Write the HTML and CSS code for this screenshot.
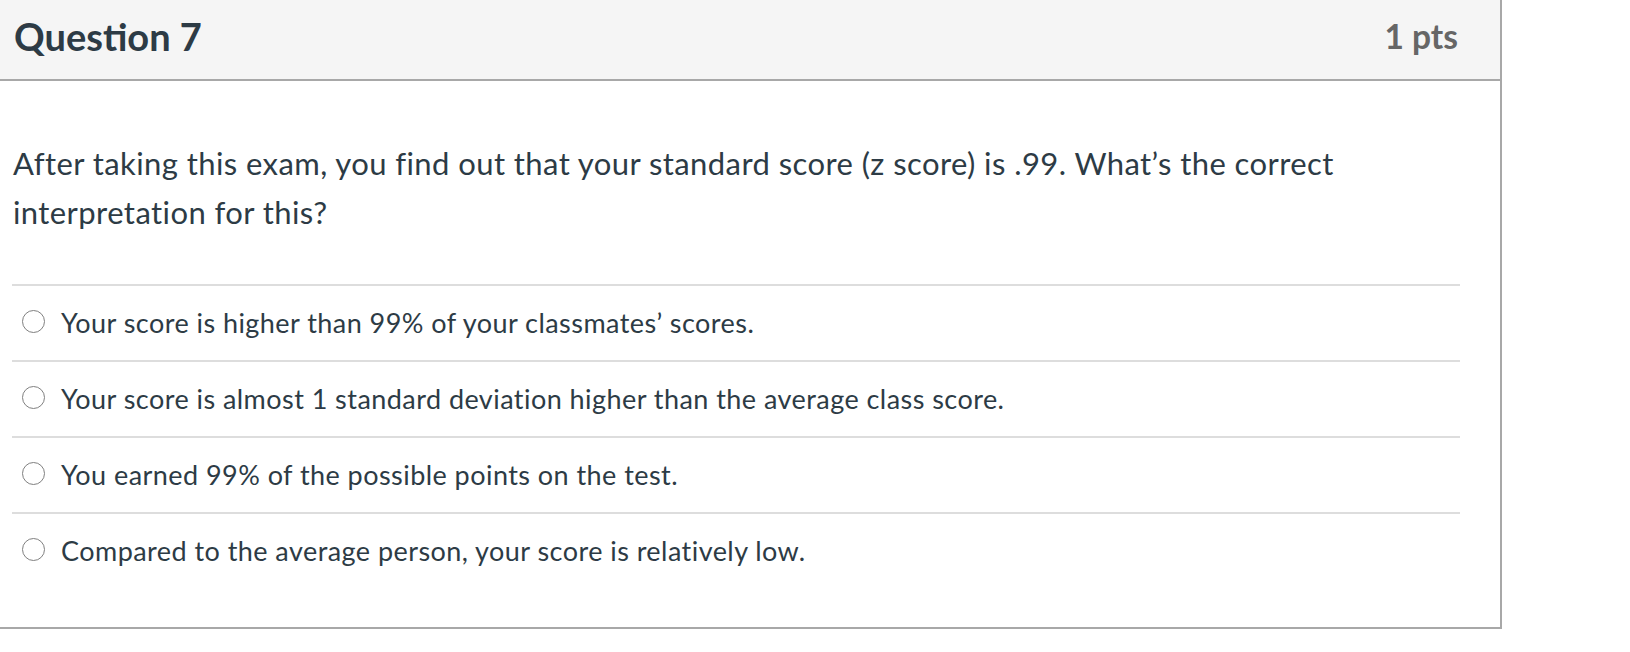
FILE: index.html
```html
<!DOCTYPE html>
<html lang="en">
<head>
<meta charset="utf-8">
<title>Question 7</title>
<link rel="stylesheet" href="styles.css">
</head>
<body>
<div class="question">
  <div class="question-header">
    <span class="question-name">Question 7</span>
    <span class="question-points">1 pts</span>
  </div>
  <div class="question-body">
    <div class="question-text">After taking this exam, you find out that your standard score (z score) is .99. What’s the correct interpretation for this?</div>
    <div class="answers">
      <label class="answer"><span class="radio"></span><span class="answer-text">Your score is higher than 99% of your classmates’ scores.</span></label>
      <label class="answer"><span class="radio"></span><span class="answer-text">Your score is almost 1 standard deviation higher than the average class score.</span></label>
      <label class="answer"><span class="radio"></span><span class="answer-text">You earned 99% of the possible points on the test.</span></label>
      <label class="answer"><span class="radio"></span><span class="answer-text">Compared to the average person, your score is relatively low.</span></label>
    </div>
  </div>
</div>
</body>
</html>
```
FILE: styles.css
```css
html, body {
  margin: 0;
  padding: 0;
  background: #ffffff;
}
body {
  font-family: Lato, "Open Sans", "Liberation Sans", sans-serif;
  color: #2d3b45;
}
.question {
  width: 1500px;
  border-right: 2px solid #a8a8a8;
  border-bottom: 2px solid #a8a8a8;
}
.question-header {
  height: 81px;
  box-sizing: border-box;
  background: #f5f5f5;
  border-bottom: 2px solid #a8a8a8;
  display: flex;
  justify-content: space-between;
  align-items: flex-start;
  padding: 14px 42px 0 14px;
  font-weight: 700;
  font-size: 38px;
  line-height: 1.2;
}
.question-name {
  color: #2d3b45;
}
.question-points {
  color: #666666;
  font-size: 33.5px;
  padding-top: 2px;
}
.question-body {
  padding: 58px 40px 39px 12px;
}
.question-text {
  padding-left: 1px;
  font-size: 31px;
  letter-spacing: 0.42px;
  line-height: 49px;
}
.answers {
  margin-top: 47px;
}
.answer {
  display: flex;
  align-items: center;
  height: 74px;
  border-top: 2px solid #dddddd;
  font-size: 27px;
  letter-spacing: 0.45px;
}
.radio {
  box-sizing: border-box;
  width: 23px;
  height: 23px;
  border: 1.8px solid #808080;
  border-radius: 50%;
  margin-left: 10px;
  margin-right: 16px;
  flex: none;
  margin-top: -3px;
}
.answer-text {
  line-height: 1.2;
}
```
